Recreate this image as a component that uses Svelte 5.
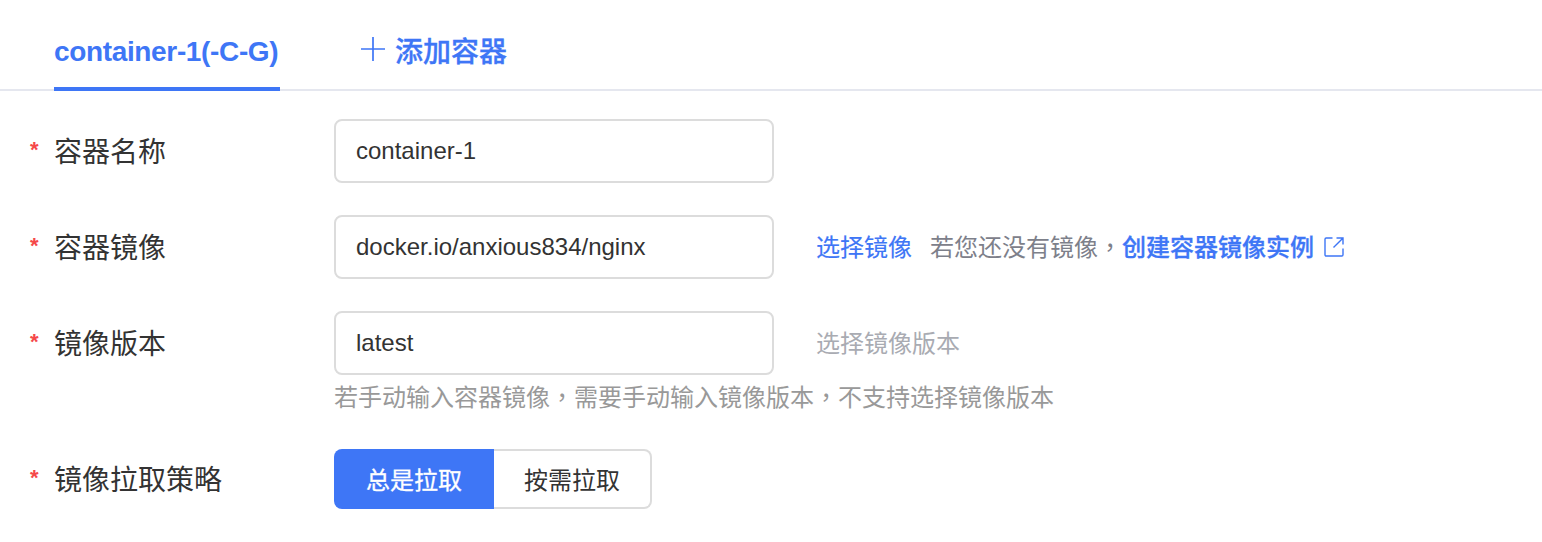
<script>
  const rows = [
    { label: '容器名称', value: 'container-1' },
    { label: '容器镜像', value: 'docker.io/anxious834/nginx' },
    { label: '镜像版本', value: 'latest' }
  ];
</script>

<div class="page">
  <div class="tabs">
    <div class="tab">container-1(-C-G)</div>
    <div class="add">
      <svg width="24" height="24" viewBox="0 0 24 24" aria-hidden="true"><path d="M12 0v24M0 12h24" stroke="#3e76f6" stroke-width="1.700" fill="none"/></svg>
      <span>添加容器</span>
    </div>
  </div>

  <div class="form">
    {#each rows as row, i}
      <div class="row">
        <div class="label"><span class="req">*</span>{row.label}</div>
        <div class="input">{row.value}</div>
        {#if i === 1}
          <div class="extra">
            <span class="link">选择镜像</span>
            <span class="note">若您还没有镜像<span class="comma">，</span><span class="strong">创建容器镜像实例</span></span>
            <svg class="ext" width="20" height="20" viewBox="0 0 20 20" aria-hidden="true"><path d="M8.500 1H2.200A1.200 1.200 0 0 0 1 2.200v15.600A1.200 1.200 0 0 0 2.200 19h15.600a1.200 1.200 0 0 0 1.200-1.200V11.500M12.500 1H19v6.500M18.800 1.200 9.500 10.500" stroke="#3e76f6" stroke-width="1.400" fill="none"/></svg>
          </div>
        {:else if i === 2}
          <div class="extra"><span class="disabled">选择镜像版本</span></div>
        {/if}
      </div>
    {/each}

    <div class="hint">若手动输入容器镜像<span class="comma">，</span>需要手动输入镜像版本<span class="comma">，</span>不支持选择镜像版本</div>

    <div class="row policy">
      <div class="label"><span class="req">*</span>镜像拉取策略</div>
      <div class="segments">
        <div class="seg on">总是拉取</div>
        <div class="seg">按需拉取</div>
      </div>
    </div>
  </div>
</div>

<style>
  :global(body) {
    margin: 0;
    background: #fff;
  }
  .page {
    width: 1542px;
    height: 542px;
    overflow: hidden;
    font-family: "Liberation Sans", "Noto Sans CJK SC", sans-serif;
    color: #333;
  }
  .tabs {
    display: flex;
    align-items: stretch;
    height: 91px;
    box-sizing: border-box;
    padding-left: 54px;
    border-bottom: 2px solid #e5e7ef;
  }
  .tab {
    width: 226px;
    height: 91px;
    box-sizing: border-box;
    padding-top: 35px;
    font-size: 28px;
    line-height: 34px;
    font-weight: 700;
    letter-spacing: -0.35px;
    color: #3e76f6;
    border-bottom: 4px solid #3e76f6;
    white-space: nowrap;
  }
  .add {
    display: flex;
    align-items: flex-start;
    margin-left: 81px;
    padding-top: 36px;
    gap: 10px;
    font-size: 28px;
    line-height: 34px;
    font-weight: 500;
    color: #3e76f6;
    -webkit-text-stroke: 0.3px #3e76f6;
  }
  .add svg {
    margin-top: 1px;
  }
  .form {
    padding-top: 28px;
  }
  .row {
    display: flex;
    align-items: center;
    height: 64px;
    margin-bottom: 32px;
  }
  .label {
    position: relative;
    width: 334px;
    box-sizing: border-box;
    padding: 4px 0 0 54px;
    font-size: 28px;
    line-height: 40px;
    color: #333;
  }
  .req {
    position: absolute;
    left: 30px;
    top: 1px;
    font-size: 22px;
    font-weight: 700;
    color: #f5484a;
  }
  .input {
    width: 440px;
    height: 64px;
    box-sizing: border-box;
    padding: 0 20px;
    border: 2px solid #dcdcdc;
    border-radius: 8px;
    font-size: 24px;
    line-height: 60px;
    color: #333;
  }
  .extra {
    display: flex;
    align-items: center;
    margin-left: 42px;
    padding-bottom: 4px;
    font-size: 24px;
  }
  .link, .strong {
    color: #3e76f6;
  }
  .link {
    -webkit-text-stroke: 0.15px #3e76f6;
  }
  .strong {
    font-weight: 500;
    -webkit-text-stroke: 0.3px #3e76f6;
  }
  .note {
    margin-left: 18px;
    color: #7d808a;
  }
  .comma {
    font-family: "Noto Sans CJK TC", sans-serif;
    line-height: 0;
  }
  .ext {
    margin-left: 10px;
    margin-top: 4px;
  }
  .disabled {
    color: #a9abb2;
  }
  .hint {
    margin-top: -32px;
    height: 46px;
    line-height: 46px;
    font-size: 24px;
    color: #999;
    padding-left: 334px;
    margin-bottom: 28px;
  }
  .policy {
    height: 60px;
  }
  .segments {
    display: flex;
    height: 60px;
  }
  .seg {
    width: 158px;
    box-sizing: border-box;
    padding-top: 2px;
    border: 2px solid #dcdcdc;
    border-left: none;
    border-radius: 0 8px 8px 0;
    font-size: 24px;
    line-height: 56px;
    text-align: center;
    color: #333;
  }
  .seg.on {
    width: 160px;
    background: #3e76f6;
    border: none;
    border-radius: 8px 0 0 8px;
    line-height: 60px;
    color: #fff;
    -webkit-text-stroke: 0.3px #fff;
  }
</style>
